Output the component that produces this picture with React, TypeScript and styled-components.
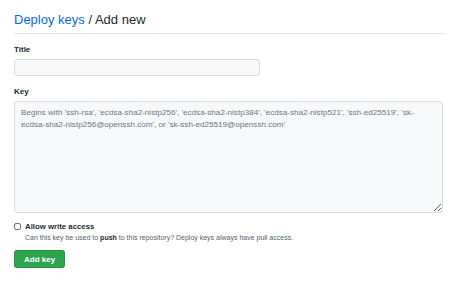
import React from "react";
import styled, { createGlobalStyle } from "styled-components";

const GlobalStyle = createGlobalStyle`
  html, body {
    margin: 0;
    padding: 0;
    background: #fff;
  }
  body {
    font-family: "Liberation Sans", Arial, sans-serif;
    color: #24292f;
  }
`;

const Page = styled.div`
  width: 474px;
  height: 284px;
  padding: 12px 29px 0 14px;
  box-sizing: border-box;
`;

const Header = styled.div`
  padding-bottom: 5px;
  border-bottom: 1px solid #e4e7ea;
  margin-bottom: 11px;
`;

const Heading = styled.h2`
  margin: 0;
  font-size: 13px;
  font-weight: 400;
  line-height: 16px;
  color: #24292f;
`;

const Crumb = styled.a`
  color: #0969da;
  text-decoration: none;
`;

const Form = styled.form`
  display: flex;
  flex-direction: column;
`;

const Field = styled.div<{ gap?: number }>`
  display: flex;
  flex-direction: column;
  margin-bottom: ${(p) => p.gap ?? 10}px;
`;

const Label = styled.label`
  font-size: 8px;
  font-weight: 700;
  line-height: 10px;
  margin-bottom: 4px;
`;

const Input = styled.input`
  width: 246px;
  height: 17px;
  box-sizing: border-box;
  border: 1px solid #d8dde2;
  border-radius: 3px;
  background: #f6f8fa;
  padding: 0 5px;
  font: inherit;
  font-size: 8px;
  outline: none;
`;

const KeyArea = styled.textarea`
  display: block;
  width: 429px;
  height: 112px;
  box-sizing: border-box;
  border: 1px solid #d8dde2;
  border-radius: 3px;
  background: #f6f8fa;
  padding: 5px 6px;
  font-family: "Liberation Sans", Arial, sans-serif;
  font-size: 8.1px;
  line-height: 11.5px;
  color: #24292f;
  outline: none;
  resize: vertical;

  &::placeholder {
    color: #6e7781;
  }
`;

const CheckRow = styled.div`
  display: flex;
  align-items: flex-start;
  gap: 4px;
`;

const Box = styled.input`
  appearance: none;
  flex: none;
  width: 7px;
  height: 7px;
  margin: 1px 0 0 0;
  border: 1px solid #6e7781;
  border-radius: 2px;
  background: #fff;
`;

const CheckText = styled.div`
  display: flex;
  flex-direction: column;
`;

const CheckLabel = styled.label`
  font-size: 7.8px;
  font-weight: 700;
  line-height: 10px;
`;

const Note = styled.p`
  margin: 1px 0 0;
  font-size: 7px;
  line-height: 9px;
  color: #57606a;

  strong {
    color: #24292f;
  }
`;

const Button = styled.button`
  align-self: flex-start;
  margin-top: 8px;
  height: 18px;
  padding: 0 9px;
  border: 1px solid rgba(27, 31, 36, 0.15);
  border-radius: 3px;
  background: #2da44e;
  color: #fff;
  font-family: "Liberation Sans", Arial, sans-serif;
  font-size: 8px;
  font-weight: 700;
  cursor: pointer;
`;

export default function App() {
  return (
    <>
      <GlobalStyle />
      <Page>
        <Header>
          <Heading>
            <Crumb href="#">Deploy keys</Crumb> / Add new
          </Heading>
        </Header>
        <Form onSubmit={(e) => e.preventDefault()}>
          <Field gap={11}>
            <Label htmlFor="title">Title</Label>
            <Input id="title" type="text" />
          </Field>
          <Field gap={9}>
            <Label htmlFor="key">Key</Label>
            <KeyArea
              id="key"
              placeholder="Begins with 'ssh-rsa', 'ecdsa-sha2-nistp256', 'ecdsa-sha2-nistp384', 'ecdsa-sha2-nistp521', 'ssh-ed25519', 'sk-ecdsa-sha2-nistp256@openssh.com', or 'sk-ssh-ed25519@openssh.com'"
            />
          </Field>
          <CheckRow>
            <Box id="write" type="checkbox" />
            <CheckText>
              <CheckLabel htmlFor="write">Allow write access</CheckLabel>
              <Note>
                Can this key be used to <strong>push</strong> to this repository? Deploy keys always have pull access.
              </Note>
            </CheckText>
          </CheckRow>
          <Button type="submit">Add key</Button>
        </Form>
      </Page>
    </>
  );
}
